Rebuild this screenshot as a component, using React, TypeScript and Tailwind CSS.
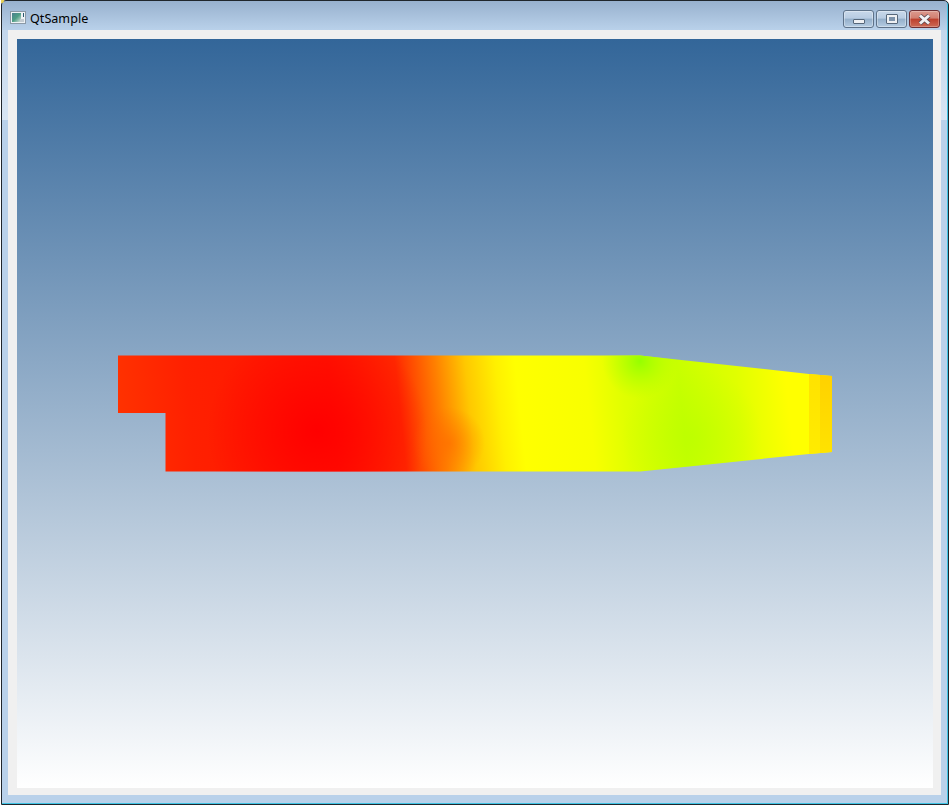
export default function App() {
  const outline = "M101 316.500 H623 L792 335 L815 337 V413 L792 415 L623 432.500 H148.500 V374 H101 Z";
  return (
    <div className="w-[950px] h-[808px] bg-white overflow-hidden font-['Noto_Sans',sans-serif] pl-[1px]">
      <div className="relative w-[948px] h-[805px] flex flex-col border border-[#20262c] rounded-t-[5px] shadow-[inset_-1px_-1px_0_#3fc4e4] bg-[linear-gradient(180deg,#98b1ce_0px,#b9d1ea_29px,#c2d6ec_29px,#d8e5f3_119px,#b9d1ea_119px,#b9d1ea_100%)] pl-[6px] pb-[8px]">
        <div className="absolute left-[-1px] top-[-1px] w-[3px] h-[3px] bg-[#e8d25a] rounded-br-[2px]" />
        <div className="h-[29px] shrink-0 flex items-start">
          <svg width="16" height="13" viewBox="0 0 16 13" className="ml-[2px] mt-[10px]">
            <defs>
              <linearGradient id="ico" x1="0" y1="0" x2="1" y2="1">
                <stop offset="0" stopColor="#4b7f8f" />
                <stop offset="0.5" stopColor="#4f9f86" />
                <stop offset="1" stopColor="#d8e0dc" />
              </linearGradient>
            </defs>
            <rect x="0.5" y="0.5" width="15" height="12" fill="#eef2f5" stroke="#8b99a6" />
            <rect x="2" y="2" width="9" height="9" fill="url(#ico)" />
            <rect x="13" y="2" width="1" height="4" fill="#2a5a70" />
            <rect x="10" y="8" width="4" height="3" fill="#c4ccd2" />
          </svg>
          <span className="ml-[4px] mt-[9px] text-[12.6px] text-black leading-[18px]">QtSample</span>
          <div className="ml-auto mr-[8px] mt-[9px] flex gap-[2px]">
            <div className="w-[31px] h-[18px] rounded-[3px] border border-[#5e7289] shadow-[inset_0_0_0_1px_rgba(255,255,255,0.35)] bg-[linear-gradient(180deg,#c8d8ea_0%,#b8cce2_45%,#94afca_50%,#b5cce2_100%)] flex items-center justify-center">
              <div className="mt-[5px] w-[12px] h-[5px] bg-[#eef0f3] border border-[#56677a] rounded-[1px]" />
            </div>
            <div className="w-[31px] h-[18px] rounded-[3px] border border-[#5e7289] shadow-[inset_0_0_0_1px_rgba(255,255,255,0.35)] bg-[linear-gradient(180deg,#c8d8ea_0%,#b8cce2_45%,#94afca_50%,#b5cce2_100%)] flex items-center justify-center">
              <div className="w-[12px] h-[10px] bg-[#eef0f3] border border-[#56677a] rounded-[1px] flex items-center justify-center">
                <div className="w-[6px] h-[4px] bg-[#7d93ab]" />
              </div>
            </div>
            <div className="w-[31px] h-[18px] rounded-[3px] border border-[#6e2f33] shadow-[inset_0_0_0_1px_rgba(255,255,255,0.25)] bg-[linear-gradient(180deg,#dc9a8e_0%,#d27f70_45%,#bd3f2c_50%,#cc6a55_100%)] flex items-center justify-center">
              <svg width="15" height="11" viewBox="0 0 15 11">
                <path d="M3 1.500 L12 9.500 M12 1.500 L3 9.500" stroke="#5c4a50" strokeWidth="4.4" />
                <path d="M3 1.500 L12 9.500 M12 1.500 L3 9.500" stroke="#f2f2f4" strokeWidth="3" />
              </svg>
            </div>
          </div>
        </div>
        <div className="w-[933px] h-[765px] bg-[#f0f0f0] p-[9px] pb-[7px] pr-[8px]">
          <div className="w-[916px] h-[749px] bg-[linear-gradient(180deg,#336699_0%,#ffffff_100%)]">
            <svg width="916" height="749" viewBox="0 0 916 749" className="block">
              <defs>
                <linearGradient
                  id="main"
                  gradientUnits="userSpaceOnUse"
                  x1="101"
                  y1="0"
                  x2="815"
                  y2="0"
                  gradientTransform="translate(-39 0) skewX(6)"
                >
                  <stop offset="0" stopColor="#ff3200" />
                  <stop offset="0.1" stopColor="#ff2000" />
                  <stop offset="0.3" stopColor="#ff1400" />
                  <stop offset="0.395" stopColor="#ff2800" />
                  <stop offset="0.451" stopColor="#ff8000" />
                  <stop offset="0.493" stopColor="#ffc800" />
                  <stop offset="0.535" stopColor="#fff000" />
                  <stop offset="0.563" stopColor="#ffff00" />
                  <stop offset="0.66" stopColor="#f8ff00" />
                  <stop offset="0.71" stopColor="#e0ff00" />
                  <stop offset="0.79" stopColor="#c8ff00" />
                  <stop offset="0.87" stopColor="#e0ff00" />
                  <stop offset="0.94" stopColor="#ffff00" />
                  <stop offset="1" stopColor="#ffff00" />
                </linearGradient>
                <linearGradient id="endA" x1="0" y1="0" x2="0" y2="1">
                  <stop offset="0" stopColor="#ffe200" />
                  <stop offset="1" stopColor="#ffec00" />
                </linearGradient>
                <linearGradient id="endB" x1="0" y1="0" x2="0" y2="1">
                  <stop offset="0" stopColor="#ffd000" />
                  <stop offset="1" stopColor="#ffe400" />
                </linearGradient>
                <radialGradient id="core" gradientUnits="userSpaceOnUse" cx="300" cy="392" r="110">
                  <stop offset="0" stopColor="#ff0000" />
                  <stop offset="1" stopColor="#ff0000" stopOpacity="0" />
                </radialGradient>
                <radialGradient id="tip" gradientUnits="userSpaceOnUse" cx="623" cy="322" r="38">
                  <stop offset="0" stopColor="#96ff00" />
                  <stop offset="1" stopColor="#b4ff00" stopOpacity="0" />
                </radialGradient>
                <radialGradient id="low" gradientUnits="userSpaceOnUse" cx="675" cy="398" r="70">
                  <stop offset="0" stopColor="#b4ff00" stopOpacity="0.55" />
                  <stop offset="1" stopColor="#b4ff00" stopOpacity="0" />
                </radialGradient>
                <radialGradient id="notch" gradientUnits="userSpaceOnUse" cx="432" cy="404" r="36">
                  <stop offset="0" stopColor="#ff6400" stopOpacity="0.55" />
                  <stop offset="1" stopColor="#ff6400" stopOpacity="0" />
                </radialGradient>
                <clipPath id="body">
                  <path d={outline} />
                </clipPath>
              </defs>
              <path d={outline} fill="url(#main)" />
              <g clipPath="url(#body)">
                <rect x="190" y="280" width="220" height="220" fill="url(#core)" />
                <rect x="396" y="368" width="72" height="72" fill="url(#notch)" />
                <rect x="580" y="280" width="90" height="90" fill="url(#tip)" />
                <rect x="600" y="325" width="150" height="150" fill="url(#low)" />
                <rect x="792" y="330" width="11" height="90" fill="url(#endA)" />
                <rect x="803" y="330" width="12" height="90" fill="url(#endB)" />
              </g>
            </svg>
          </div>
        </div>
      </div>
    </div>
  );
}
